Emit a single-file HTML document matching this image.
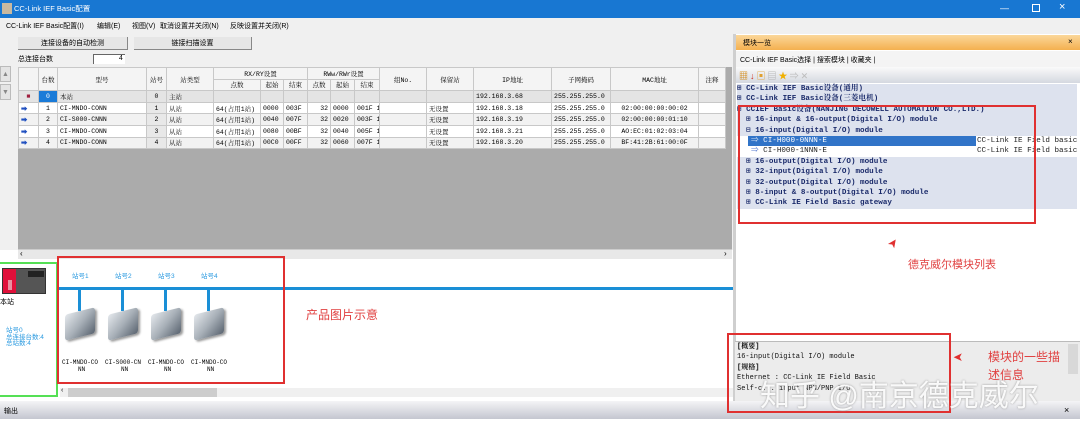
<!DOCTYPE html>
<html><head><meta charset="utf-8"><style>
*{margin:0;padding:0;box-sizing:border-box}
body{width:1080px;height:445px;overflow:hidden;background:#fff;position:relative;font-family:"Liberation Sans","Noto Sans CJK SC",sans-serif;font-size:7px;color:#000}
.a{position:absolute;white-space:nowrap}
.m{font-family:"Liberation Mono","Noto Serif CJK SC",monospace}
table{border-collapse:collapse;table-layout:fixed}
td{border:1px solid #c8c8c8;height:11.6px;padding:0 2px;white-space:nowrap;overflow:hidden;font-size:6.5px}
.h td{background:#f4f4f4;text-align:center;font-size:6.5px}
.tr{height:10.4px;line-height:10.4px;font-family:"Liberation Mono","Noto Serif CJK SC",monospace;font-weight:bold;font-size:7.6px;color:#1a2a6a;white-space:nowrap;background:#dde2ee}
.p{width:30px;height:26px;background:linear-gradient(135deg,#e4e8ec 0%,#a8b0b8 50%,#5a6470 100%);border-radius:3px;transform:skewY(-14deg);box-shadow:2px 2px 2px #999}
</style></head><body>
<!-- title -->
<div class="a" style="left:0;top:0;width:1080px;height:18px;background:#1877d2"></div>
<div class="a" style="left:2px;top:3px;width:10px;height:11px;background:#c9b9a0"></div>
<div class="a" style="left:14px;top:3px;color:#fff;font-size:7.5px">CC-Link IEF Basic配置</div>
<div class="a" style="left:1000px;top:3px;color:#fff;font-size:9px">—</div>
<div class="a" style="left:1032px;top:4px;width:8px;height:8px;border:1px solid #fff"></div>
<div class="a" style="left:1059px;top:1px;color:#fff;font-size:11px">×</div>
<!-- menu -->
<div class="a" style="left:0;top:18px;width:1080px;height:16px;background:#f0f0f0"></div>
<div class="a" style="left:6px;top:21px">CC-Link IEF Basic配置(I)</div>
<div class="a" style="left:97px;top:21px">编辑(E)</div>
<div class="a" style="left:132px;top:21px">视图(V)</div>
<div class="a" style="left:160px;top:21px">取消设置并关闭(N)</div>
<div class="a" style="left:230px;top:21px">反映设置并关闭(R)</div>
<div class="a" style="left:0;top:34px;width:735px;height:216px;background:#f0f0f0"></div>
<div class="a" style="left:18px;top:37px;width:110px;height:13px;background:#e6e6e6;border-right:1px solid #888;border-bottom:1px solid #888;text-align:center;line-height:13px">连接设备的自动检测</div>
<div class="a" style="left:134px;top:37px;width:118px;height:13px;background:#e6e6e6;border-right:1px solid #888;border-bottom:1px solid #888;text-align:center;line-height:13px">链接扫描设置</div>
<div class="a" style="left:18px;top:54px">总连接台数</div>
<div class="a m" style="left:93px;top:54px;width:32px;height:10px;border-left:1px solid #666;border-top:1px solid #666;background:#fff;text-align:right;padding-right:2px;line-height:9px">4</div>
<div class="a" style="left:0;top:66px;width:11px;height:16px;background:#e4e4e4;border:1px solid #bbb;color:#888;text-align:center;line-height:15px">▲</div>
<div class="a" style="left:0;top:84px;width:11px;height:16px;background:#e4e4e4;border:1px solid #bbb;color:#888;text-align:center;line-height:15px">▼</div>
<!-- table -->
<div class="a" style="left:18px;top:67px;width:714px;height:183px;background:#ababab"></div>
<table class="a m" style="left:18px;top:67px;width:708px">
<colgroup><col style="width:20px"><col style="width:19px"><col style="width:89px"><col style="width:20px"><col style="width:47px"><col style="width:47px"><col style="width:23px"><col style="width:24px"><col style="width:23px"><col style="width:24px"><col style="width:25px"><col style="width:47px"><col style="width:47px"><col style="width:78px"><col style="width:59px"><col style="width:88px"><col style="width:27px"></colgroup>
<tr class="h"><td rowspan="2"></td><td rowspan="2">台数</td><td rowspan="2">型号</td><td rowspan="2">站号</td><td rowspan="2">站类型</td><td colspan="3">RX/RY设置</td><td colspan="3">RWw/RWr设置</td><td rowspan="2">组No.</td><td rowspan="2">保留站</td><td rowspan="2">IP地址</td><td rowspan="2">子网掩码</td><td rowspan="2">MAC地址</td><td rowspan="2">注释</td></tr>
<tr class="h"><td>点数</td><td>起始</td><td>结束</td><td>点数</td><td>起始</td><td>结束</td></tr>
<tr style="background:#e4e4e4"><td style="text-align:center;color:#a02040">■</td><td style="background:#1a7bd8;color:#fff;text-align:center">0</td><td>本站</td><td style="text-align:center">0</td><td>主站</td><td></td><td></td><td></td><td></td><td></td><td></td><td></td><td></td><td>192.168.3.68</td><td>255.255.255.0</td><td></td><td></td></tr>
<tr style="background:#fff"><td style="color:#2050c0">➡</td><td style="text-align:center">1</td><td>CI-MNDO-CONN</td><td style="text-align:center;background:#e8e8e8">1</td><td>从站</td><td>64(占用1站)</td><td>0000</td><td>003F</td><td style="text-align:right">32</td><td>0000</td><td>001F 1</td><td></td><td>无设置</td><td>192.168.3.18</td><td>255.255.255.0</td><td style="text-align:center">02:00:00:00:00:02</td><td></td></tr>
<tr style="background:#f2f2f2"><td style="color:#2050c0">➡</td><td style="text-align:center">2</td><td>CI-S000-CNNN</td><td style="text-align:center;background:#e8e8e8">2</td><td>从站</td><td>64(占用1站)</td><td>0040</td><td>007F</td><td style="text-align:right">32</td><td>0020</td><td>003F 1</td><td></td><td>无设置</td><td>192.168.3.19</td><td>255.255.255.0</td><td style="text-align:center">02:00:00:00:01:10</td><td></td></tr>
<tr style="background:#fff"><td style="color:#2050c0">➡</td><td style="text-align:center">3</td><td>CI-MNDO-CONN</td><td style="text-align:center;background:#e8e8e8">3</td><td>从站</td><td>64(占用1站)</td><td>0080</td><td>00BF</td><td style="text-align:right">32</td><td>0040</td><td>005F 1</td><td></td><td>无设置</td><td>192.168.3.21</td><td>255.255.255.0</td><td style="text-align:center">AO:EC:01:02:03:04</td><td></td></tr>
<tr style="background:#f2f2f2"><td style="color:#2050c0">➡</td><td style="text-align:center">4</td><td>CI-MNDO-CONN</td><td style="text-align:center;background:#e8e8e8">4</td><td>从站</td><td>64(占用1站)</td><td>00C0</td><td>00FF</td><td style="text-align:right">32</td><td>0060</td><td>007F 1</td><td></td><td>无设置</td><td>192.168.3.20</td><td>255.255.255.0</td><td style="text-align:center">BF:41:2B:61:00:0F</td><td></td></tr>
</table>
<div class="a" style="left:18px;top:249px;width:714px;height:10px;background:#e8e8e8;border-top:1px solid #ccc"></div>
<div class="a" style="left:20px;top:249px;font-size:8px">‹</div>
<div class="a" style="left:724px;top:249px;font-size:8px">›</div>
<!-- graphic area -->
<div class="a" style="left:0;top:262px;width:58px;height:135px;border:2px solid #55e055;border-left:none"></div>
<div class="a" style="left:2px;top:268px;width:44px;height:26px;border:1px solid #333;background:#555"></div>
<div class="a" style="left:3px;top:269px;width:13px;height:24px;background:#e0103a"></div>
<div class="a" style="left:8px;top:280px;width:4px;height:10px;background:#e890a0"></div>
<div class="a" style="left:28px;top:271px;width:16px;height:6px;background:#222"></div>
<div class="a" style="left:0;top:297px;font-size:7px">本站</div>
<div class="a" style="left:6px;top:328px;color:#2a9ae0;font-size:6.5px;line-height:6.5px">站号0<br>总连接台数:4<br>总站数:4</div>
<div class="a" style="left:58px;top:287px;width:677px;height:3px;background:#1a8fd6"></div>
<div class="a" style="left:57px;top:256px;width:228px;height:128px;border:2px solid #e03030"></div>
<div class="a" style="left:72px;top:270px;color:#2a9ae0;font-size:6.5px">站号1</div>
<div class="a" style="left:115px;top:270px;color:#2a9ae0;font-size:6.5px">站号2</div>
<div class="a" style="left:158px;top:270px;color:#2a9ae0;font-size:6.5px">站号3</div>
<div class="a" style="left:201px;top:270px;color:#2a9ae0;font-size:6.5px">站号4</div>
<div class="a" style="left:78px;top:289px;width:3px;height:22px;background:#1a8fd6"></div>
<div class="a" style="left:121px;top:289px;width:3px;height:22px;background:#1a8fd6"></div>
<div class="a" style="left:164px;top:289px;width:3px;height:22px;background:#1a8fd6"></div>
<div class="a" style="left:207px;top:289px;width:3px;height:22px;background:#1a8fd6"></div>
<div class="a p" style="left:65px;top:311px"></div>
<div class="a p" style="left:108px;top:311px"></div>
<div class="a p" style="left:151px;top:311px"></div>
<div class="a p" style="left:194px;top:311px"></div>
<div class="a m" style="left:62px;top:359px;font-size:6px">CI-MNDO-CO</div>
<div class="a m" style="left:105px;top:359px;font-size:6px">CI-S000-CN</div>
<div class="a m" style="left:148px;top:359px;font-size:6px">CI-MNDO-CO</div>
<div class="a m" style="left:191px;top:359px;font-size:6px">CI-MNDO-CO</div>
<div class="a m" style="left:78px;top:366px;font-size:6px">NN</div>
<div class="a m" style="left:121px;top:366px;font-size:6px">NN</div>
<div class="a m" style="left:164px;top:366px;font-size:6px">NN</div>
<div class="a m" style="left:207px;top:366px;font-size:6px">NN</div>
<div class="a" style="left:306px;top:306px;color:#e04040;font-size:12px">产品图片示意</div>
<div class="a" style="left:60px;top:388px;width:675px;height:9px;background:#f0f0f0"></div>
<div class="a" style="left:68px;top:388px;width:149px;height:9px;background:#cdcdcd"></div>
<div class="a" style="left:61px;top:387px;font-size:7px">‹</div>
<!-- output bar -->
<div class="a" style="left:0;top:401px;width:1080px;height:18px;background:linear-gradient(#f4f4f6,#c4c6d0)"></div>
<div class="a" style="left:4px;top:406px;font-size:7px">输出</div>
<div class="a" style="left:1064px;top:405px;font-size:9px">×</div>
<!-- divider -->
<div class="a" style="left:733px;top:34px;width:3px;height:367px;background:#cfcfcf"></div>
<!-- right panel -->
<div class="a" style="left:736px;top:34px;width:344px;height:367px;background:#fff"></div>
<div class="a" style="left:736px;top:35px;width:344px;height:15px;background:linear-gradient(#fbd79a,#f4b050)"></div>
<div class="a" style="left:743px;top:38px;font-size:7px">模块一览</div>
<div class="a" style="left:1068px;top:37px;font-size:8px">×</div>
<div class="a" style="left:736px;top:51px;width:344px;height:16px;background:#f4f4f4"></div>
<div class="a" style="left:740px;top:55px;font-size:7px">CC-Link IEF Basic选择 | 搜索模块 | 收藏夹 |</div>
<div class="a" style="left:736px;top:67px;width:344px;height:16px;background:linear-gradient(#fafafa,#d4d8e0)"></div>
<div class="a" style="left:739px;top:69px;font-size:9px;color:#d08000;letter-spacing:2px">▦<span style="color:#d03020">↓</span><span style="color:#e0a030">▣</span><span style="color:#aaa">▤</span><span style="color:#f0b000">★</span><span style="color:#bbb">⇒✕</span></div>
<div class="a" style="left:737px;top:84px;width:340px">
<div class="tr">⊞ CC-Link IEF Basic设备(通用)</div>
<div class="tr">⊞ CC-Link IEF Basic设备(三菱电机)</div>
<div class="tr">⊟ CCIEF Basic设备(NANJING DECOWELL AUTOMATION CO.,LTD.)</div>
<div class="tr">&nbsp; ⊞ 16-input &amp; 16-output(Digital I/O) module</div>
<div class="tr">&nbsp; ⊟ 16-input(Digital I/O) module</div>
<div class="tr" style="background:#fff;font-weight:normal;position:relative"><span style="position:absolute;left:11px;top:0;width:228px;height:10.4px;background:#3174c8;color:#fff;padding-left:3px">⇒ CI-H000-0NNN-E</span><span style="position:absolute;left:240px;color:#222">CC-Link IE Field basic</span></div>
<div class="tr" style="background:#fff;font-weight:normal;position:relative"><span style="position:absolute;left:14px;color:#222"><span style="color:#2050c0">⇒</span> CI-H000-1NNN-E</span><span style="position:absolute;left:240px;color:#222">CC-Link IE Field basic</span></div>
<div class="tr">&nbsp; ⊞ 16-output(Digital I/O) module</div>
<div class="tr">&nbsp; ⊞ 32-input(Digital I/O) module</div>
<div class="tr">&nbsp; ⊞ 32-output(Digital I/O) module</div>
<div class="tr">&nbsp; ⊞ 8-input &amp; 8-output(Digital I/O) module</div>
<div class="tr">&nbsp; ⊞ CC-Link IE Field Basic gateway</div>
</div>
<div class="a" style="left:738px;top:105px;width:298px;height:119px;border:2px solid #e03030"></div>
<div class="a" style="left:888px;top:236px;color:#e03030;font-size:12px;transform:rotate(-55deg)">➤</div>
<div class="a" style="left:908px;top:256px;color:#e04040;font-size:11px">德克威尔模块列表</div>
<!-- description -->
<div class="a" style="left:735px;top:341px;width:345px;height:60px;background:#ececec;border-top:1px solid #bbb"></div>
<div class="a" style="left:1068px;top:344px;width:10px;height:30px;background:#d8d8d8"></div>
<div class="a m" style="left:737px;top:342px;font-size:7px;line-height:10.4px;color:#111"><b>[概要]</b><br>16-input(Digital I/O) module<br><b>[规格]</b><br>Ethernet : CC-Link IE Field Basic<br>Self-c... input NPN/PNP I/O</div>
<div class="a" style="left:727px;top:333px;width:224px;height:80px;border:2px solid #e03030"></div>
<div class="a" style="left:953px;top:350px;color:#e03030;font-size:12px;transform:scaleX(-1)">➤</div>
<div class="a" style="left:988px;top:348px;color:#e04040;font-size:12px;line-height:18px">模块的一些描<br>述信息</div>
<div class="a" style="left:760px;top:380px;color:rgba(255,255,255,0.92);font-size:30px;line-height:34px;text-shadow:0 0 2px #999">知乎 @南京德克威尔</div>
</body></html>
